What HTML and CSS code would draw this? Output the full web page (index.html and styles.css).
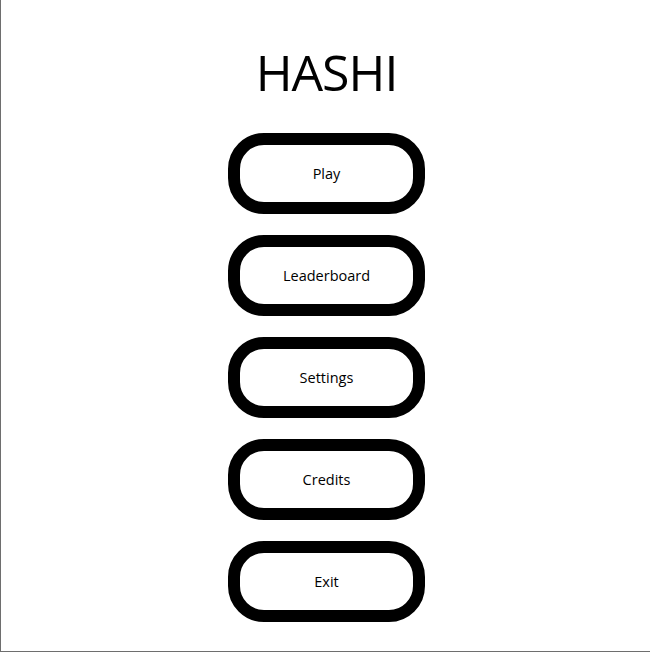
FILE: index.html
```html
<!DOCTYPE html>
<html lang="en">
<head>
  <meta charset="UTF-8">
  <title>Hashi</title>
  <link rel="stylesheet" href="styles.css">
</head>
<body>
  <div class="window">
    <h1 class="title">HASHI</h1>

    <div class="menu">
      <button class="menu-button">Play</button>
      <button class="menu-button">Leaderboard</button>
      <button class="menu-button">Settings</button>
      <button class="menu-button">Credits</button>
      <button class="menu-button">Exit</button>
    </div>
  </div>
</body>
</html>
```

FILE: styles.css
```css
/* Base styles */
html, body {
  margin: 0;
  padding: 0;
  background-color: white;
  font-family: "Open Sans", "Noto Sans", sans-serif;
  color: black;
}

.window {
  box-sizing: border-box;
  height: 652px;
  border-left: 1px solid #6e6e6e;
  border-bottom: 1px solid #6e6e6e;
  display: flex;
  flex-direction: column;
  align-items: center;
}

/* Title */
.title {
  margin: 39px 0 0 2px;
  font-size: 50px;
  font-weight: normal;
  line-height: 66px;
  letter-spacing: -1px;
}

/* Menu */
.menu {
  margin: 28px 0 0 2px;
  display: flex;
  flex-direction: column;
  gap: 21px;
}

.menu-button {
  box-sizing: border-box;
  width: 197px;
  height: 81px;
  border: 12px solid black;
  border-radius: 36px;
  background-color: white;
  font-family: inherit;
  font-size: 14.5px;
  color: black;
  cursor: pointer;
}
```
